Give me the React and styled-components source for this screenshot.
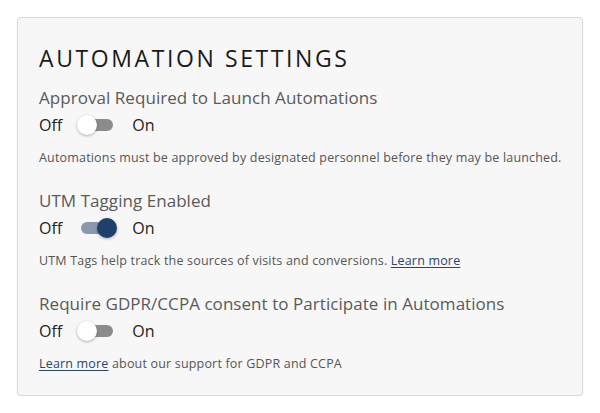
import React, { useState } from 'react';
import styled, { createGlobalStyle } from 'styled-components';

const GlobalStyle = createGlobalStyle`
  body {
    margin: 0;
    background: #fff;
    font-family: "Open Sans", "Liberation Sans", sans-serif;
  }
`;

const Card = styled.section`
  margin: 17px 0 0 17px;
  width: 566px;
  height: 379px;
  box-sizing: border-box;
  padding: 26px 18px 0 21px;
  background: #f7f7f7;
  border: 1px solid #d9d9d9;
  border-radius: 4px;
  box-shadow: 0 1px 2px rgba(0, 0, 0, 0.06);
`;

const Title = styled.h2`
  margin: 0 0 14px;
  font-size: 23px;
  line-height: 28px;
  font-weight: 400;
  letter-spacing: 2.6px;
  color: #1a1a1a;
`;

const Setting = styled.div`
  display: flex;
  flex-direction: column;
  & + & {
    margin-top: 22px;
  }
`;

const Label = styled.div`
  font-size: 17px;
  line-height: 24px;
  color: #5a5a5a;
  letter-spacing: 0.05px;
`;

const ToggleRow = styled.div`
  display: flex;
  align-items: center;
  gap: 15px;
  height: 28px;
  margin-top: 1px;
  font-size: 16px;
  color: #222;
`;

const SwitchBox = styled.button`
  position: relative;
  width: 40px;
  height: 20px;
  padding: 0;
  border: 0;
  background: none;
  cursor: pointer;
`;

const Track = styled.span`
  position: absolute;
  left: 4px;
  right: 4px;
  top: 4px;
  height: 12px;
  border-radius: 6px;
  background: ${p => (p.$on ? '#8a99b0' : '#8c8c8c')};
`;

const Thumb = styled.span`
  position: absolute;
  top: 0;
  left: ${p => (p.$on ? '20px' : '0')};
  width: 20px;
  height: 20px;
  border-radius: 50%;
  background: ${p => (p.$on ? '#1f3f6c' : '#fff')};
  box-shadow: 0 1px 3px rgba(0, 0, 0, 0.3);
`;

const Help = styled.p`
  margin: 10px 0 0;
  font-size: 12.5px;
  line-height: 18px;
  color: #555;
  letter-spacing: 0.18px;
  white-space: nowrap;
`;

const Link = styled.a`
  color: #2a466b;
  text-decoration: underline;
  text-underline-offset: 2px;
`;

const Switch = ({ on, onToggle }) => (
  <SwitchBox type="button" onClick={onToggle} aria-pressed={on}>
    <Track $on={on} />
    <Thumb $on={on} />
  </SwitchBox>
);

export default function App() {
  const [settings, setSettings] = useState({
    approval: false,
    utm: true,
    gdpr: false
  });

  const toggle = key => () =>
    setSettings(s => ({ ...s, [key]: !s[key] }));

  return (
    <>
      <GlobalStyle />
      <Card>
        <Title>AUTOMATION SETTINGS</Title>
        <Setting>
          <Label>Approval Required to Launch Automations</Label>
          <ToggleRow>
            <span>Off</span>
            <Switch on={settings.approval} onToggle={toggle('approval')} />
            <span>On</span>
          </ToggleRow>
          <Help>
            Automations must be approved by designated personnel before they may be launched.
          </Help>
        </Setting>
        <Setting>
          <Label>UTM Tagging Enabled</Label>
          <ToggleRow>
            <span>Off</span>
            <Switch on={settings.utm} onToggle={toggle('utm')} />
            <span>On</span>
          </ToggleRow>
          <Help>
            UTM Tags help track the sources of visits and conversions. <Link href="#">Learn more</Link>
          </Help>
        </Setting>
        <Setting>
          <Label>Require GDPR/CCPA consent to Participate in Automations</Label>
          <ToggleRow>
            <span>Off</span>
            <Switch on={settings.gdpr} onToggle={toggle('gdpr')} />
            <span>On</span>
          </ToggleRow>
          <Help>
            <Link href="#">Learn more</Link> about our support for GDPR and CCPA
          </Help>
        </Setting>
      </Card>
    </>
  );
}
